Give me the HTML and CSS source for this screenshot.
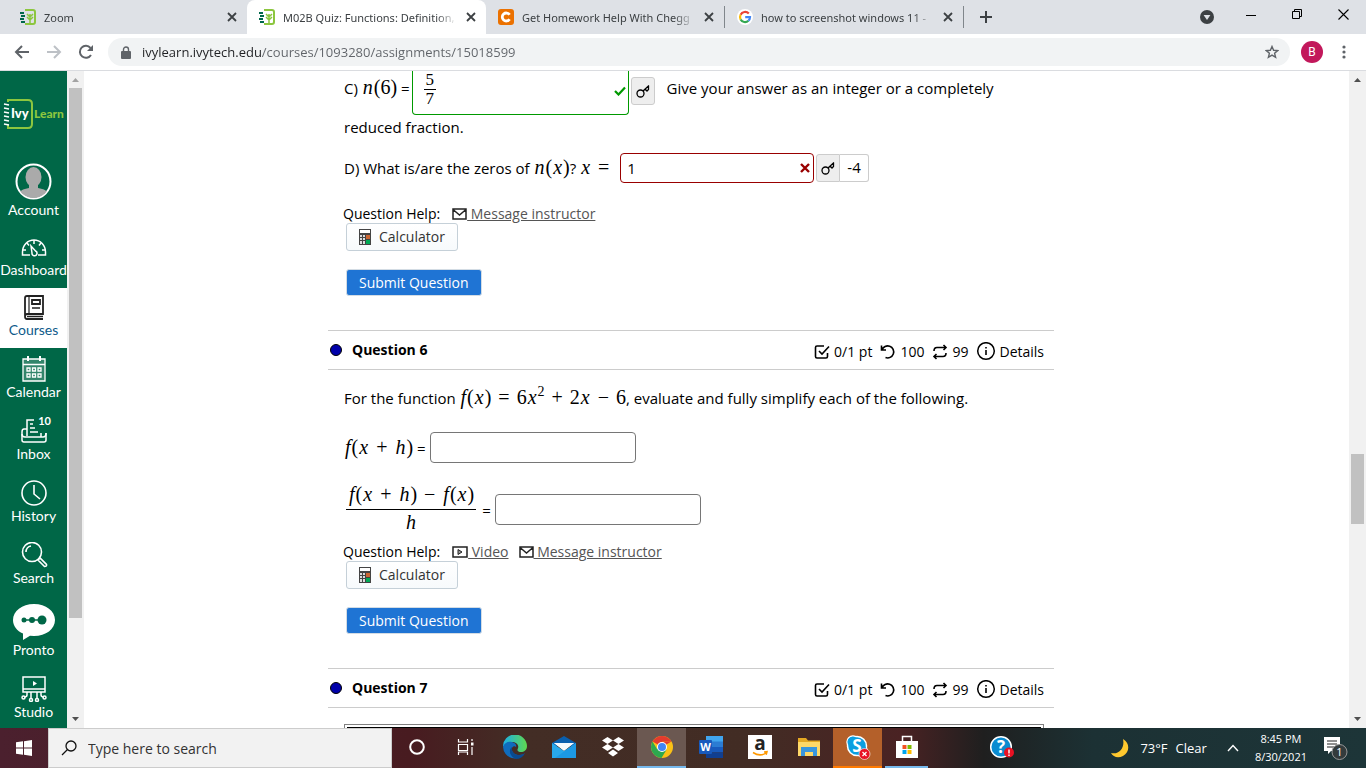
FILE: index.html
```html
<!DOCTYPE html>
<html lang="en">
<head>
  <meta charset="UTF-8">
  <title>M02B Quiz: Functions: Definition</title>
  <link rel="stylesheet" href="styles.css">
</head>
<body>

  <!-- Tabs -->
  <div class="tabs">
    <div class="tab">
      <svg class="favicon" width="16" height="16" viewBox="0 0 16 16"><path d="M5 1h8a2 2 0 0 1 2 2v10a2 2 0 0 1-2 2H5" fill="none" stroke="#8cc63f" stroke-width="2"/><path d="M0 4h4M1 7h4M0 10h4M1 13h4" stroke="#00694a" stroke-width="2"/><path d="M10 15V5M10 8L7 5M10 8l3-3M10 11L7 8M10 11l3-3" fill="none" stroke="#8cc63f" stroke-width="1.5"/></svg>
      <span class="tab-title">Zoom</span>
      <button class="close" aria-label="Close"><svg width="10" height="10" viewBox="0 0 10 10"><path d="M1 1l8 8M9 1L1 9" stroke="#3c4043" stroke-width="1.8"/></svg></button>
    </div>
    <div class="tab active">
      <svg class="favicon" width="16" height="16" viewBox="0 0 16 16"><path d="M5 1h8a2 2 0 0 1 2 2v10a2 2 0 0 1-2 2H5" fill="none" stroke="#8cc63f" stroke-width="2"/><path d="M0 4h4M1 7h4M0 10h4M1 13h4" stroke="#00694a" stroke-width="2"/><path d="M10 15V5M10 8L7 5M10 8l3-3M10 11L7 8M10 11l3-3" fill="none" stroke="#8cc63f" stroke-width="1.5"/></svg>
      <span class="tab-title">M02B Quiz: Functions: Definition,</span>
      <button class="close" aria-label="Close"><svg width="10" height="10" viewBox="0 0 10 10"><path d="M1 1l8 8M9 1L1 9" stroke="#3c4043" stroke-width="1.8"/></svg></button>
    </div>
    <div class="tab line">
      <svg class="favicon" width="16" height="16" viewBox="0 0 16 16"><rect width="16" height="16" rx="3" fill="#eb7100"/><path d="M11.6 5.8A4 4 0 1 0 11.6 10.2" fill="none" stroke="#fff" stroke-width="2.8"/></svg>
      <span class="tab-title">Get Homework Help With Chegg</span>
      <button class="close" aria-label="Close"><svg width="10" height="10" viewBox="0 0 10 10"><path d="M1 1l8 8M9 1L1 9" stroke="#3c4043" stroke-width="1.8"/></svg></button>
    </div>
    <div class="tab line">
      <svg class="favicon" width="16" height="16" viewBox="0 0 16 16"><circle cx="8" cy="8" r="8" fill="#fff"/><g fill="none" stroke-width="2.2"><path d="M11.8 4.6A5 5 0 0 0 3.6 5.8" stroke="#ea4335"/><path d="M3.6 5.8a5 5 0 0 0 0 4.6" stroke="#fbbc05"/><path d="M3.6 10.4a5 5 0 0 0 7.8 1.3" stroke="#34a853"/><path d="M11.4 11.7A5 5 0 0 0 13 8.2H8.2" stroke="#4285f4"/></g></svg>
      <span class="tab-title">how to screenshot windows 11 -</span>
      <button class="close" aria-label="Close"><svg width="10" height="10" viewBox="0 0 10 10"><path d="M1 1l8 8M9 1L1 9" stroke="#3c4043" stroke-width="1.8"/></svg></button>
    </div>
    <button class="new-tab" aria-label="New tab"><svg width="12" height="12" viewBox="0 0 12 12"><path d="M6 0v12M0 6h12" stroke="#3c4043" stroke-width="2"/></svg></button>
    <div class="window-buttons">
      <button aria-label="Search tabs"><svg width="14" height="14" viewBox="0 0 14 14"><circle cx="7" cy="7" r="7" fill="#3c4043"/><path d="M3.6 5h6.8L7 10z" fill="#dee1e6"/></svg></button>
      <button class="win" aria-label="Minimize"><svg width="10" height="10" viewBox="0 0 10 10"><path d="M0 5.500h10" stroke="#000"/></svg></button>
      <button class="win" aria-label="Restore"><svg width="11" height="11" viewBox="0 0 11 11"><path d="M.5 2.500h7v7h-7zM2.500 2.500v-2h7v7h-2" fill="none" stroke="#000"/></svg></button>
      <button class="win" aria-label="Close window"><svg width="11" height="11" viewBox="0 0 11 11"><path d="M.5.5l10 10M10.500.5l-10 10" stroke="#000" stroke-width="1.1"/></svg></button>
    </div>
  </div>

  <!-- Address bar -->
  <div class="toolbar">
    <button aria-label="Back"><svg width="16" height="16" viewBox="0 0 16 16"><path d="M15 8H2M8 2L2 8l6 6" fill="none" stroke="#5f6368" stroke-width="2"/></svg></button>
    <button aria-label="Forward"><svg width="16" height="16" viewBox="0 0 16 16"><path d="M1 8h13M8 2l6 6-6 6" fill="none" stroke="#bdc1c6" stroke-width="2"/></svg></button>
    <button aria-label="Reload"><svg width="16" height="16" viewBox="0 0 16 16"><path d="M13 11A6 6 0 1 1 12.500 4" fill="none" stroke="#5f6368" stroke-width="2"/><path d="M15 1v6H9z" fill="#5f6368"/></svg></button>
    <div class="omnibox">
      <svg width="10" height="13" viewBox="0 0 10 13"><rect x="0" y="5" width="10" height="8" rx="1" fill="#5f6368"/><path d="M2.500 5V3.500a2.500 2.500 0 0 1 5 0V5" fill="none" stroke="#5f6368" stroke-width="1.4"/></svg>
      <input class="url" type="text" aria-label="Address" value="ivylearn.ivytech.edu/courses/1093280/assignments/15018599">
      <svg width="14" height="14" viewBox="0 0 14 14"><path d="M7 1.500l1.600 3.800 4.100.3-3.100 2.700 1 4L7 10.100l-3.600 2.200 1-4L1.300 5.600l4.100-.3z" fill="none" stroke="#5f6368" stroke-width="1.400"/></svg>
    </div>
    <button class="profile">B</button>
    <button aria-label="Menu"><svg width="4" height="14" viewBox="0 0 4 14"><g fill="#5f6368"><circle cx="2" cy="2" r="1.600"/><circle cx="2" cy="7" r="1.600"/><circle cx="2" cy="12" r="1.600"/></g></svg></button>
  </div>

  <div class="page">
    <!-- Global navigation -->
    <nav class="sidebar">
      <a href="#" class="logo">
        <svg width="64" height="32" viewBox="0 0 64 32">
          <path d="M7 4V2h20q4 0 4 4v20q0 4-4 4H7v-3" fill="none" stroke="#8cc63f" stroke-width="2"/>
          <path d="M3 6l5 1M3 10l5 1M3 14l5 1M3 18l5 1M3 22l5 1M3 26l5 1" stroke="#fff" stroke-width="1.700"/>
          <text x="10" y="20" class="logo-ivy">Ivy</text>
          <text x="33" y="20" class="logo-learn">Learn</text>
        </svg>
      </a>
      <a href="#" class="nav-item account">
        <svg width="37" height="37" viewBox="0 0 37 37"><defs><clipPath id="face"><circle cx="18.500" cy="18.500" r="16.500"/></clipPath></defs><circle cx="18.500" cy="18.500" r="17" fill="#006747" stroke="#fff" stroke-width="2"/><g clip-path="url(#face)" fill="#aaa"><ellipse cx="18.500" cy="14" rx="8" ry="10"/><path d="M14 21h9v4c6 1 10 3 12 7v6H2v-6c2-4 6-6 12-7z"/></g></svg>
        <span>Account</span>
      </a>
      <a href="#" class="nav-item">
        <svg width="28" height="26" viewBox="0 0 28 26"><g fill="none" stroke="#fff" stroke-width="1.500"><path d="M10 21H2.500v-3a11.500 12 0 0 1 23 0v3H18"/><path d="M14 6v4M7 9l2 2.500M21 9L19 11.500M3 16h3M22 16h3"/><path d="M11 12l1 7a2.500 2.500 0 1 0 3.500-2z"/></g></svg>
        <span>Dashboard</span>
      </a>
      <a href="#" class="nav-item current">
        <svg width="24" height="26" viewBox="0 0 24 26"><g fill="none" stroke="#222" stroke-width="1.800"><path d="M3 22V4q0-2 2-2h16v18H5q-2 0-2 2.500T5 25h16"/><path d="M7 2v18" stroke-width="1.200"/><path d="M10 6h8v4h-8z"/><path d="M10 14h8M5 22.500h16" stroke-width="1.500"/></g></svg>
        <span>Courses</span>
      </a>
      <a href="#" class="nav-item">
        <svg width="24" height="26" viewBox="0 0 24 26"><path d="M1 3h22v22H1z" fill="#fff" opacity=".2"/><g fill="none" stroke="#fff" stroke-width="1.300"><path d="M1 3h22v22H1zM1 8.500h22" /><path d="M6 0v5M18 0v5" stroke-width="2"/><path d="M5 12h3v3H5zM10.500 12h3v3h-3zM16 12h3v3h-3zM5 18h3v3H5zM10.500 18h3v3h-3zM16 18h3v3h-3z"/></g></svg>
        <span>Calendar</span>
      </a>
      <a href="#" class="nav-item">
        <svg width="28" height="26" viewBox="0 0 28 26"><g fill="none" stroke="#fff" stroke-width="1.500"><path d="M7 18V2h7M10 6h3M10 10h5M10 14h8M7 11H4q-2 0-2 3v8q0 2 2 2h20q2 0 2-2v-7"/><path d="M2 16q0 3 3 3h18q3 0 3-4M21 15v4"/></g></svg>
        <b class="badge">10</b>
        <span>Inbox</span>
      </a>
      <a href="#" class="nav-item">
        <svg width="28" height="26" viewBox="0 0 28 26"><circle cx="14" cy="13" r="12" fill="none" stroke="#fff" stroke-width="1.600"/><path d="M14 5v9l6 5" fill="none" stroke="#fff" stroke-width="1.600"/></svg>
        <span>History</span>
      </a>
      <a href="#" class="nav-item">
        <svg width="28" height="26" viewBox="0 0 28 26"><g fill="none" stroke="#fff" stroke-width="1.600"><circle cx="12" cy="10" r="9.500"/><path d="M6 10a6 6 0 0 1 5-6"/><path d="M18 18l2-2 6.500 6.500q.5 2-2 2z"/></g></svg>
        <span>Search</span>
      </a>
      <a href="#" class="nav-item pronto">
        <svg width="42" height="36" viewBox="0 0 42 36"><path d="M21 0c12 0 21 7 21 16s-9 16-21 16l-4-.3L10 36v-6.500C4 27 0 22 0 16 0 7 9 0 21 0z" fill="#fff"/><path d="M10 16h18" stroke="#006747" stroke-width="1.500"/><g fill="#006747"><circle cx="11" cy="16" r="2.500"/><circle cx="19" cy="16" r="3"/><circle cx="29" cy="16" r="4.500"/></g></svg>
        <span>Pronto</span>
      </a>
      <a href="#" class="nav-item">
        <svg width="28" height="26" viewBox="0 0 28 26"><g fill="none" stroke="#fff" stroke-width="1.500"><path d="M3 1h22v15H3zM3 13h22M11 16v6M17 16v6M7 16v3q0 2-3 2M21 16v3q0 2 3 2"/><circle cx="11" cy="24" r="1.500"/><circle cx="17" cy="24" r="1.500"/><circle cx="3.500" cy="21.500" r="1.500"/><circle cx="24.500" cy="21.500" r="1.500"/></g><path d="M13 5l4 2.500-4 2.500z" fill="#fff"/></svg>
        <span>Studio</span>
      </a>
    </nav>
    <div class="scrollbar">
      <svg width="17" height="17" viewBox="0 0 17 17"><path d="M5 11l3.500-4 3.500 4z" fill="#a3a3a3"/></svg>
      <div class="track"><div class="thumb nav-thumb"></div></div>
      <svg width="17" height="17" viewBox="0 0 17 17"><path d="M5 6l3.500 4L12 6z" fill="#505050"/></svg>
    </div>

    <main>
      <!-- Question 5, scrolled -->
      <section class="body">
        <div class="row row-c">
          <span class="label-c">C) <span class="math"><i>n</i>(6)</span> =</span>
          <div class="answer-ok">
            <span class="frac"><span>5</span><span>7</span></span>
            <svg width="12" height="10" viewBox="0 0 12 10"><path d="M1 5l3.500 3.500L11 1.500" fill="none" stroke="#090" stroke-width="2.200"/></svg>
          </div>
          <button class="key" aria-label="Show answer"><svg width="14" height="14" viewBox="0 0 14 14"><circle cx="4.500" cy="9.500" r="3.500" fill="none" stroke="#000" stroke-width="1.300"/><path d="M7 7l6-5.500M9 5l2 2 1.500-1.500V2" fill="none" stroke="#000" stroke-width="1.300"/></svg></button>
          <span class="give">Give your answer as an integer or a completely</span>
        </div>
        <div class="text">reduced fraction.</div>
        <div class="row row-d">
          <label for="zeros">D) What is/are the zeros of <span class="math"><i>n</i>(<i>x</i>)</span>? <span class="math"><i>x</i> <span class="op">=</span></span></label>
          <div class="answer-bad">
            <input type="text" id="zeros" value="1">
            <svg width="10" height="10" viewBox="0 0 10 10"><path d="M1 1l8 8M9 1L1 9" stroke="#900" stroke-width="2.400"/></svg>
          </div>
          <div class="reveal">
            <button class="key" aria-label="Show answer"><svg width="14" height="14" viewBox="0 0 14 14"><circle cx="4.500" cy="9.500" r="3.500" fill="none" stroke="#000" stroke-width="1.300"/><path d="M7 7l6-5.500M9 5l2 2 1.500-1.500V2" fill="none" stroke="#000" stroke-width="1.300"/></svg></button>
            <span class="key-answer">-4</span>
          </div>
        </div>
      </section>
      <section class="help">
        <div class="help-line">
          <span class="help-label">Question Help:</span>
          <a href="#"><svg width="15" height="12" viewBox="0 0 15 12"><path d="M1 1h13v10H1zM1 1.500l6.500 5.500L14 1.500" fill="none" stroke="#222" stroke-width="1.500"/></svg>&nbsp;Message instructor</a>
        </div>
        <button class="calculator"><svg width="12" height="16" viewBox="0 0 12 16"><rect width="12" height="16" fill="#444"/><rect x="1" y="1" width="10" height="3" fill="#fff"/><path d="M1 6h2v2H1zM4 6h2v2H4zM1 9h2v2H1zM4 9h2v2H4zM1 12h2v3H1zM4 12h2v3H4z" fill="#ddd"/><path d="M7 6h4v4H7z" fill="#c63"/><path d="M7 11h4v4H7z" fill="#0a5"/></svg>Calculator</button>
        <button class="submit">Submit Question</button>
      </section>

      <!-- Question 6 -->
      <header class="question">
        <span class="dot"></span>
        <h2>Question 6</h2>
        <div class="info">
          <span><svg width="16" height="16" viewBox="0 0 16 16"><path d="M10 2H3q-1.500 0-1.500 1.500v9Q1.500 14 3 14h9q1.500 0 1.500-1.500V9M5 7l3 3 7-7.500" fill="none" stroke="#000" stroke-width="1.600"/></svg>0/1 pt</span>
          <span><svg width="16" height="16" viewBox="0 0 16 16"><path d="M1.500 1.500V6H6M2 6A6 6 0 1 1 5.500 13.500" fill="none" stroke="#000" stroke-width="1.600"/></svg>100</span>
          <span><svg width="16" height="16" viewBox="0 0 16 16"><path d="M11.500 1L14 3.500 11.500 6M14 3.500H5Q2 3.500 2 7M4.500 15L2 12.500 4.500 10M2 12.500h9q3 0 3-3.500" fill="none" stroke="#000" stroke-width="1.600"/></svg>99</span>
          <a href="#"><svg class="info-icon" width="20" height="20" viewBox="0 0 20 20"><circle cx="10" cy="9" r="8.300" fill="none" stroke="#000" stroke-width="1.500"/><path d="M10 8v5M10 5v1.600" stroke="#000" stroke-width="1.600"/></svg>Details</a>
        </div>
      </header>
      <section class="body">
        <p>For the function <span class="math"><i>f</i>(<i>x</i>) <span class="op">=</span> 6<i>x</i><sup>2</sup> <span class="op">+</span> 2<i>x</i> <span class="op">−</span> 6</span>, evaluate and fully simplify each of the following.</p>
        <div class="row">
          <label for="fxh"><span class="math"><i>f</i>(<i>x</i> <span class="op">+</span> <i>h</i>)</span> =</label>
          <input class="box" type="text" id="fxh">
        </div>
        <div class="row row-frac">
          <label for="quotient" class="quotient"><span class="frac math big"><span><i>f</i>(<i>x</i> <span class="op">+</span> <i>h</i>) <span class="op">−</span> <i>f</i>(<i>x</i>)</span><span><i>h</i></span></span> =</label>
          <input class="box" type="text" id="quotient">
        </div>
      </section>
      <section class="help">
        <div class="help-line">
          <span class="help-label">Question Help:</span>
          <a href="#"><svg width="16" height="12" viewBox="0 0 16 12"><path d="M1 1h14v10H1z" fill="none" stroke="#222" stroke-width="1.500"/><path d="M6 3.500l4 2.500-4 2.500z" fill="#999" stroke="#222"/></svg>&nbsp;Video</a>
          <a href="#"><svg width="15" height="12" viewBox="0 0 15 12"><path d="M1 1h13v10H1zM1 1.500l6.500 5.500L14 1.500" fill="none" stroke="#222" stroke-width="1.500"/></svg>&nbsp;Message instructor</a>
        </div>
        <button class="calculator"><svg width="12" height="16" viewBox="0 0 12 16"><rect width="12" height="16" fill="#444"/><rect x="1" y="1" width="10" height="3" fill="#fff"/><path d="M1 6h2v2H1zM4 6h2v2H4zM1 9h2v2H1zM4 9h2v2H4zM1 12h2v3H1zM4 12h2v3H4z" fill="#ddd"/><path d="M7 6h4v4H7z" fill="#c63"/><path d="M7 11h4v4H7z" fill="#0a5"/></svg>Calculator</button>
        <button class="submit">Submit Question</button>
      </section>

      <!-- Question 7 -->
      <header class="question">
        <span class="dot"></span>
        <h2>Question 7</h2>
        <div class="info">
          <span><svg width="16" height="16" viewBox="0 0 16 16"><path d="M10 2H3q-1.500 0-1.500 1.500v9Q1.500 14 3 14h9q1.500 0 1.500-1.500V9M5 7l3 3 7-7.500" fill="none" stroke="#000" stroke-width="1.600"/></svg>0/1 pt</span>
          <span><svg width="16" height="16" viewBox="0 0 16 16"><path d="M1.500 1.500V6H6M2 6A6 6 0 1 1 5.500 13.500" fill="none" stroke="#000" stroke-width="1.600"/></svg>100</span>
          <span><svg width="16" height="16" viewBox="0 0 16 16"><path d="M11.500 1L14 3.500 11.500 6M14 3.500H5Q2 3.500 2 7M4.500 15L2 12.500 4.500 10M2 12.500h9q3 0 3-3.500" fill="none" stroke="#000" stroke-width="1.600"/></svg>99</span>
          <a href="#"><svg class="info-icon" width="20" height="20" viewBox="0 0 20 20"><circle cx="10" cy="9" r="8.300" fill="none" stroke="#000" stroke-width="1.500"/><path d="M10 8v5M10 5v1.600" stroke="#000" stroke-width="1.600"/></svg>Details</a>
        </div>
      </header>
      <section class="body">
        <div class="frame"><div class="frame-cell"></div></div>
      </section>
    </main>

    <div class="scrollbar">
      <svg width="17" height="17" viewBox="0 0 17 17"><path d="M5 11l3.500-4 3.500 4z" fill="#505050"/></svg>
      <div class="track"><div class="thumb page-thumb"></div></div>
      <svg width="17" height="17" viewBox="0 0 17 17"><path d="M5 6l3.500 4L12 6z" fill="#505050"/></svg>
    </div>
  </div>

  <!-- Windows taskbar -->
  <footer class="taskbar">
    <button class="start" aria-label="Start"><svg width="16" height="16" viewBox="0 0 16 16"><path d="M0 2.300L7 1.300v6.200H0zM8 1.200L16 0v7.500H8zM0 8.500h7v6.200l-7-1zM8 8.500h8V16l-8-1.200z" fill="#fff"/></svg></button>
    <div class="search">
      <svg width="16" height="16" viewBox="0 0 16 16"><circle cx="10" cy="6" r="5" fill="none" stroke="#111" stroke-width="1.300"/><path d="M6.500 9.500L1 15" stroke="#111" stroke-width="1.300"/></svg>
      <input type="text" aria-label="Search" placeholder="Type here to search">
    </div>
    <button class="app" aria-label="Cortana"><svg width="18" height="18" viewBox="0 0 18 18"><circle cx="9" cy="9" r="6.800" fill="none" stroke="#fff" stroke-width="2"/></svg></button>
    <button class="app" aria-label="Task View"><svg width="18" height="16" viewBox="0 0 18 16"><path d="M1.500 0v3h9V0M1.500 5.500h9v6h-9zM1.500 16v-3h9v3M15 0v2M15 8v8" fill="none" stroke="#fff" stroke-width="1.200"/><path d="M14 3.500h2.500v3H14z" fill="#fff"/></svg></button>
    <button class="app" aria-label="Edge"><svg width="24" height="24" viewBox="0 0 24 24"><defs><linearGradient id="edge" x1="0" x2="1"><stop offset="0" stop-color="#1bb0e8"/><stop offset="1" stop-color="#5fd84f"/></linearGradient></defs><path d="M0 12a12 12 0 0 1 24-1c0 4-3 6-6 6-2 0-4-1-3.500-2.500C17 10 13 7 9 7 4 7 1 10 0 12z" fill="url(#edge)"/><path d="M0 12C1 8 5 6 9 7c3 .8 5 3 4 5-1-1-3-1-4 1-1 3 2 7 7 7 3 0 5-1 6-2A12 12 0 0 1 0 12z" fill="#0f6cbd"/><path d="M9 12c-4 3-2 10 4 12 4 0 7-2 9-6-2 1.500-4 2-6 2-5 0-8-4-7-8z" fill="#0a4a8f"/></svg></button>
    <button class="app" aria-label="Mail"><svg width="24" height="22" viewBox="0 0 24 22"><path d="M0 7l12-7 12 7v3H0z" fill="#0a5fae"/><path d="M2 7h20L12 15z" fill="#fff"/><path d="M0 7l12 8 12-8v15H0z" fill="#28a8ea"/><path d="M24 7v15H3z" fill="#1490df" opacity=".6"/><path d="M2 7h20l-10 7z" fill="#f5f9fd"/></svg></button>
    <button class="app" aria-label="Dropbox"><svg width="24" height="20" viewBox="0 0 24 20"><path d="M6.500 0L12 3.500 6.500 7 1 3.500zM17.500 0L23 3.500 17.500 7 12 3.500zM6.500 7L12 10.500 6.500 14 1 10.500zM17.500 7L23 10.500 17.500 14 12 10.500zM12 12.500l5 3.500-5 3.500L7 16z" fill="#fff"/></svg></button>
    <button class="app on" aria-label="Chrome"><svg width="22" height="22" viewBox="0 0 22 22"><circle cx="11" cy="11" r="11" fill="#fbc116"/><path d="M11 11L1.500 5.500A11 11 0 0 1 20.500 5.500H11z" fill="#e33b2e"/><path d="M11 5.500h9.500L11 11z" fill="#e33b2e"/><path d="M1.500 5.500A11 11 0 0 0 10.500 22l5-8.300L11 11 6 13z" fill="#2da94f"/><circle cx="11" cy="11" r="5" fill="#fff"/><circle cx="11" cy="11" r="4" fill="#4285f4"/></svg></button>
    <button class="app" aria-label="Word"><svg width="24" height="22" viewBox="0 0 24 22"><path d="M7 0h17v6H7z" fill="#41a5ee"/><path d="M7 5.500h17V11H7z" fill="#2b7cd3"/><path d="M7 11h17v5.500H7z" fill="#185abd"/><path d="M7 16.500h17V22H7z" fill="#103f91"/><rect y="4" width="13" height="14" rx="1" fill="#185abd"/><text x="6.500" y="15" text-anchor="middle" class="word-w">W</text></svg></button>
    <button class="app" aria-label="Amazon"><svg class="amazon" width="24" height="24" viewBox="0 0 24 24"><rect width="24" height="24" fill="#fff"/><text x="12" y="15" text-anchor="middle" class="amazon-a">a</text><path d="M5 17.500q7 4.500 13 .5M16 17l3-.3-.8 3" fill="none" stroke="#f90" stroke-width="1.500"/></svg></button>
    <button class="app" aria-label="File Explorer"><svg width="22" height="18" viewBox="0 0 22 18"><path d="M0 0h8l2 2.500h12V18H0z" fill="#e5a823"/><path d="M0 4h22v14H0z" fill="#ffd868"/><path d="M3 9h16v9h-4v-4H7v4H3z" fill="#3a96dd"/></svg></button>
    <button class="app alert" aria-label="Skype"><svg width="26" height="26" viewBox="0 0 26 26"><g fill="#0a9fe0" stroke="#fff" stroke-width="1.500"><circle cx="8" cy="8" r="6"/><circle cx="16" cy="16" r="6"/><circle cx="12" cy="12" r="9.500"/></g><g fill="#0a9fe0"><circle cx="8" cy="8" r="5.500"/><circle cx="16" cy="16" r="5.500"/></g><text x="12" y="18" text-anchor="middle" class="skype-s">S</text><circle cx="19.500" cy="20" r="5.500" fill="#e81123" stroke="#fff" stroke-width=".6"/><path d="M17.500 18l4 4M21.500 18l-4 4" stroke="#fff" stroke-width="1.200"/></svg></button>
    <button class="app open" aria-label="Microsoft Store"><svg width="24" height="24" viewBox="0 0 24 24"><path d="M7.500 7V1.500h9V7" fill="none" stroke="#fff" stroke-width="1.500"/><path d="M1 6h22v17H1z" fill="#fff"/><path d="M7.500 10h4v4h-4z" fill="#f25022"/><path d="M12.500 10h4v4h-4z" fill="#7fba00"/><path d="M7.500 15h4v4h-4z" fill="#00a4ef"/><path d="M12.500 15h4v4h-4z" fill="#ffb900"/></svg></button>
    <button class="app get-help" aria-label="Get Help"><svg width="26" height="24" viewBox="0 0 26 24"><circle cx="12" cy="12" r="10.300" fill="#0a8bd0" stroke="#fff" stroke-width="1.500"/><text x="12" y="18" text-anchor="middle" class="skype-s">?</text><circle cx="20" cy="17.500" r="5" fill="#e81123"/><path d="M20 14.500v4M20 19.500v1.500" stroke="#fff" stroke-width="1.400"/></svg></button>
    <div class="tray">
      <svg width="20" height="20" viewBox="0 0 20 20"><path d="M13 1c7 4 7 13 0 17-5 2.500-10 1-12-3 8 2 14-5 12-14z" fill="#ffc82e"/></svg>
      <span class="weather"><span>73°F</span><span>Clear</span></span>
      <svg class="chevron" width="12" height="8" viewBox="0 0 12 8"><path d="M1 7l5-5.500L11 7" fill="none" stroke="#fff" stroke-width="1.400"/></svg>
      <div class="clock"><span>8:45 PM</span><span>8/30/2021</span></div>
      <svg class="notify" width="25" height="24" viewBox="0 0 25 24"><path d="M1 1h16v14H8l-3 3v-3H1z" fill="#fff"/><path d="M4 5h10M4 8h10M4 11h7" stroke="#222"/><circle cx="16.500" cy="16" r="7.500" fill="#333b3c" stroke="#999"/><text x="16.500" y="20" text-anchor="middle" class="notify-n">1</text></svg>
    </div>
  </footer>
</body>
</html>
```
FILE: styles.css
```css
* {
  box-sizing: border-box;
}

body {
  margin: 0;
  height: 100vh;
  display: flex;
  flex-direction: column;
  overflow: hidden;
  font-family: "Open Sans", sans-serif;
  font-size: 14px;
  color: #000;
  background: #fff;
}

button {
  font: inherit;
  border: none;
  background: none;
  padding: 0;
  display: flex;
  align-items: center;
  justify-content: center;
}

svg {
  flex: none;
}

/* Tabs */
.tabs {
  display: flex;
  height: 34px;
  padding-left: 8px;
  background: #dee1e6;
  flex: none;
}

.tab {
  display: flex;
  align-items: center;
  width: 239px;
  padding: 0 9px 0 12px;
  font-family: "Noto Sans", sans-serif;
  font-size: 11px;
  color: #3c4043;
}

.tab.active {
  background: #fff;
  border-radius: 8px 8px 0 0;
}

.tab.line {
  border-right: 1px solid #80868b;
  border-image: linear-gradient(transparent 7px, #80868b 7px, #80868b 27px, transparent 27px) 1;
}

.tab-title {
  flex: 1;
  margin: 0 8px;
  white-space: nowrap;
  mask-image: linear-gradient(to right, #000 88%, transparent);
}

.close {
  width: 12px;
  height: 16px;
}

.new-tab {
  width: 44px;
}

.window-buttons {
  margin-left: auto;
  display: flex;
}

.window-buttons button {
  width: 42px;
}

.window-buttons .win {
  width: 46px;
  height: 29px;
}

/* Address bar */
.toolbar {
  display: flex;
  align-items: center;
  flex: none;
  height: 37px;
  padding: 0 6px;
  border-bottom: 1px solid #dadce0;
}

.toolbar button {
  width: 32px;
  height: 32px;
}

.omnibox {
  flex: 1;
  display: flex;
  align-items: center;
  gap: 11px;
  height: 28px;
  margin: 0 11px 0 6px;
  padding: 0 11px 0 13px;
  border-radius: 14px;
  background: #f1f3f4;
}

.url {
  flex: 1;
  border: none;
  padding: 0;
  font-family: "Open Sans", sans-serif;
  font-size: 13px;
  color: #202124;
  -webkit-text-fill-color: transparent;
  background: linear-gradient(to right, #202124 119px, #5f6368 119px);
  background-clip: text;
}

.toolbar .profile {
  width: 22px;
  height: 22px;
  border-radius: 50%;
  background: #c2185b;
  color: #fff;
  font-size: 12px;
  font-family: Roboto, sans-serif;
  margin-right: 5px;
}

/* Page */
.page {
  flex: 1;
  min-height: 0;
  display: flex;
  overflow: hidden;
}

.sidebar {
  width: 67px;
  flex: none;
  overflow: hidden;
  background: #006747;
  font-family: Lato, sans-serif;
}

.logo {
  display: flex;
  height: 84px;
  padding: 27px 0 0 1px;
}

.logo svg {
  overflow: visible;
}

.logo-ivy,
.logo-learn {
  font-size: 13px;
  font-weight: 900;
  fill: #fff;
}

.logo-learn {
  font-size: 12px;
  fill: #8cc63f;
}

.nav-item {
  position: relative;
  display: flex;
  flex-direction: column;
  align-items: center;
  padding: 8px 0;
  line-height: 20px;
  color: #fff;
  text-decoration: none;
}

.nav-item:nth-child(3),
.nav-item.current {
  padding-top: 6px;
}

.nav-item.current {
  background: #fff;
  color: #0e5a8a;
}

.badge {
  position: absolute;
  top: 1px;
  right: 16px;
  font-size: 11px;
}

.scrollbar {
  display: flex;
  flex-direction: column;
  width: 17px;
  flex: none;
  background: #f1f1f1;
}

.track {
  flex: 1;
  padding: 0 2px;
}

.thumb {
  background: #c1c1c1;
}

.nav-thumb {
  height: 85%;
}

.page-thumb {
  height: 70px;
  margin-top: 366px;
}

main {
  flex: 1;
  overflow: hidden;
  padding: 0 295px 0 244px;
  line-height: 24px;
}

.body {
  padding: 0 10px 0 16px;
  font-size: 15px;
}

.row {
  display: flex;
  align-items: center;
  margin-top: 22px;
}

.row-c {
  margin-top: 0;
  align-items: flex-start;
  line-height: 34px;
}

.row-d {
  margin-top: 14px;
}

.row-frac {
  margin-top: 19px;
}

.math {
  font-family: "Liberation Serif", serif;
  font-size: 20px;
  line-height: 0;
}

.math i {
  margin: 0 1px;
}

.math .op {
  margin: 0 2px;
}

.math sup {
  font-size: 14px;
}

.frac {
  display: inline-flex;
  flex-direction: column;
  text-align: center;
  font-family: "Liberation Serif", serif;
  font-size: 17px;
  line-height: 18px;
}

.frac > span {
  padding: 0 2px;
}

.frac > span:first-child {
  border-bottom: 1px solid #000;
}

.frac.big {
  font-size: 20px;
  line-height: 24px;
  margin: 0 6px 0 2px;
}

.frac.big > span {
  padding-bottom: 3px;
}

.quotient {
  display: flex;
  align-items: center;
}

.answer-ok {
  display: flex;
  justify-content: space-between;
  width: 217px;
  height: 44px;
  margin: 0 2px;
  padding: 0 2px 0 11px;
  border: 1px solid #090;
  border-top: none;
  border-radius: 0 0 4px 4px;
}

.answer-ok svg {
  margin-top: 15px;
}

.key {
  width: 24px;
  height: 28px;
  border: 1px solid #ccc;
  border-radius: 3px;
  background: #eee;
}

.row-c .key {
  margin-top: 6px;
}

.give {
  margin-left: 12px;
}

.answer-bad {
  display: flex;
  align-items: center;
  width: 194px;
  height: 30px;
  margin: 0 2px 0 9px;
  padding: 0 3px 0 6px;
  border: 1px solid #900;
  border-radius: 4px;
}

.answer-bad input {
  flex: 1;
  min-width: 0;
  border: none;
  padding: 0;
  font: inherit;
}

.reveal {
  display: flex;
}

.reveal .key {
  border-radius: 3px 0 0 3px;
}

.key-answer {
  height: 28px;
  padding: 0 7px;
  border: 1px solid #ccc;
  border-left: none;
  border-radius: 0 3px 3px 0;
}

.box {
  width: 206px;
  height: 31px;
  margin-left: 4px;
  border: 1px solid #767676;
  border-radius: 4px;
  font: inherit;
}

p {
  margin: 16px 0 0;
}

/* Help links and buttons */
.help {
  padding: 22px 18px 34px 15px;
}

.question + .body + .help {
  padding-top: 6px;
}

.help-line {
  display: flex;
  gap: 10px;
  line-height: 18px;
}

.help-label {
  margin-right: 2px;
}

.help-line a {
  display: flex;
  align-items: center;
  color: #555;
}

.calculator,
.submit {
  height: 28px;
  margin-left: 3px;
  padding: 0 12px;
  border: 1px solid #c5d0d8;
  border-radius: 3px;
}

.calculator {
  gap: 8px;
  color: #333;
  background: linear-gradient(#fff, #f7fafc);
}

.submit {
  height: 27px;
  margin-top: 18px;
  border-color: #d3dce4;
  background: #1f74d4;
  color: #fff;
}

.question {
  display: flex;
  align-items: center;
  height: 40px;
  padding: 0 10px 0 2px;
  border-top: 1px solid #ccc;
  border-bottom: 1px solid #ccc;
}

.dot {
  width: 12px;
  height: 12px;
  border: 1px solid #000;
  border-radius: 50%;
  background: #00a;
}

h2 {
  margin: 0 auto 0 10px;
  font-size: 14px;
}

.info {
  display: flex;
  gap: 8px;
  padding-top: 3px;
}

.info span,
.info a {
  display: flex;
  align-items: center;
  gap: 4px;
  color: #000;
  text-decoration: none;
}

.info a {
  gap: 3px;
}

.frame {
  margin-top: 16px;
  height: 200px;
  padding: 2px;
  border: 1px solid #808080;
}

.frame-cell {
  height: 100%;
  border: 1px solid #000;
}

/* Taskbar */
.taskbar {
  display: flex;
  flex: none;
  height: 40px;
  color: #fff;
  font-family: "Open Sans", sans-serif;
  background: linear-gradient(to right, #4b202e 0, #481b20 30%, #432d25 38%, #422c24 55%, #4a2223 66%, #1f1f1f 72%, #1c3134 80%, #1d3538 100%);
}

.start {
  width: 48px;
}

.search {
  display: flex;
  align-items: center;
  gap: 11px;
  width: 344px;
  padding: 0 12px;
  background: #f2f2f2;
  border: 1px solid #ccc;
}

.search input {
  flex: 1;
  min-width: 0;
  border: none;
  padding: 0;
  background: none;
  font: inherit;
}

.search input::placeholder {
  color: #333;
}

.app {
  width: 49px;
  border-bottom: 2px solid transparent;
}

.app.on {
  background: #6b5851;
  border-color: #76b9ed;
}

.app.alert {
  background: #b4602a;
  border-color: #ff7a00;
}

.app.open {
  border-image: linear-gradient(to right, transparent 10%, #76b9ed 10%, #76b9ed 90%, transparent 90%) 2;
}

.get-help {
  margin-left: 46px;
}

.tray {
  display: flex;
  align-items: center;
  margin-left: auto;
  padding-right: 18px;
}

.weather {
  display: flex;
  gap: 8px;
  margin: 0 20px 0 10px;
  font-size: 13px;
}

.clock {
  display: flex;
  flex-direction: column;
  align-items: center;
  margin: 0 16px;
  font-size: 11px;
  line-height: 18px;
}

.word-w {
  font: bold 11px "Open Sans", sans-serif;
  fill: #fff;
}

.amazon {
  overflow: visible;
}

.amazon-a {
  font: bold 19px "Open Sans", sans-serif;
  fill: #222;
}

.skype-s {
  font: bold 17px "Open Sans", sans-serif;
  fill: #fff;
}

.notify-n {
  font: 11px "Open Sans", sans-serif;
  fill: #fff;
}
```
